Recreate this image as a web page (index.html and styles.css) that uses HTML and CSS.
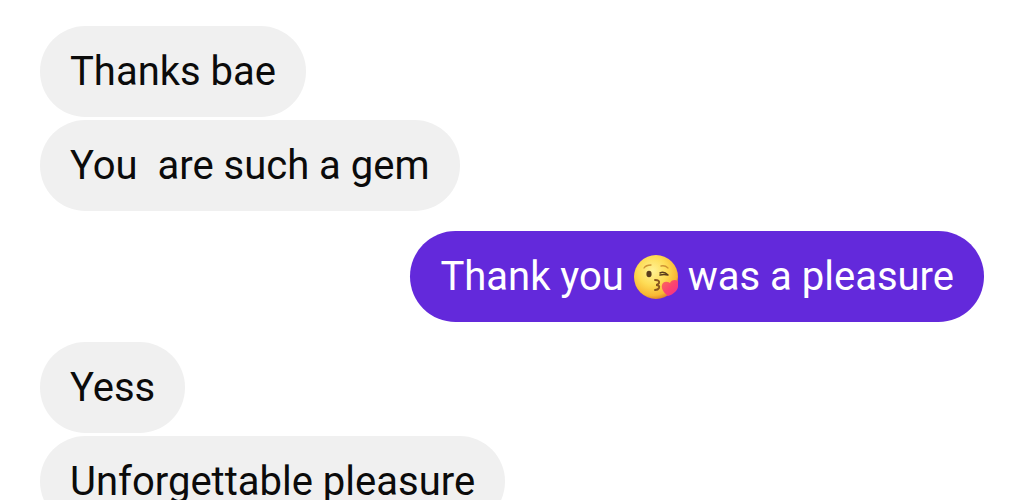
FILE: index.html
```html
<!DOCTYPE html>
<html lang="en">
  <head>
    <meta charset="UTF-8" />
    <meta name="viewport" content="width=device-width, initial-scale=1.0" />
    <title>Chat</title>
    <link rel="stylesheet" href="styles.css">
  </head>
  <body>
    <main class="chat">
      <div class="group received">
        <p class="bubble">Thanks bae</p>
        <p class="bubble">You&nbsp; are such a gem</p>
      </div>
      <div class="group sent">
        <p class="bubble">Thank you
          <svg class="emoji" viewBox="0 0 44 44" role="img" aria-label="Face blowing a kiss">
            <defs>
              <radialGradient id="face" cx="42%" cy="36%" r="66%">
                <stop offset="0%" stop-color="#fff296"/>
                <stop offset="50%" stop-color="#fedc55"/>
                <stop offset="85%" stop-color="#f8b733"/>
                <stop offset="100%" stop-color="#dc7f28"/>
              </radialGradient>
              <linearGradient id="heart" x1="0" y1="0" x2="1" y2="1">
                <stop offset="0%" stop-color="#fa6f58"/>
                <stop offset="50%" stop-color="#fb4270"/>
                <stop offset="100%" stop-color="#f02c92"/>
              </linearGradient>
            </defs>
            <circle cx="22" cy="22" r="22" fill="url(#face)"/>
            <path d="M10 13 Q12 10 17 10" stroke="#cf9434" stroke-width="1.3" fill="none" stroke-linecap="round"/>
            <path d="M27 11 Q31 10 34 13" stroke="#cf9434" stroke-width="1.3" fill="none" stroke-linecap="round"/>
            <ellipse cx="15" cy="19" rx="2.6" ry="3.3" fill="#593c1c"/>
            <path d="M26 18 Q30 16 34 20 Q30 19 26 20" stroke="#593c1c" stroke-width="1.5" fill="none" stroke-linecap="round" stroke-linejoin="round"/>
            <path d="M21 25 Q26 25 25 28 Q24 30 22 30 Q26 30 25 33 Q24 35 21 35" stroke="#8a551f" stroke-width="1.9" fill="none" stroke-linecap="round"/>
            <path d="M34 41 C30 38 27 34 28 30 C29 26 33 26 36 28 C37 25 41 24 44 26 C45 30 44 34 41 37 C39 39 37 40 34 41 Z" fill="url(#heart)"/>
          </svg>
          was a pleasure</p>
      </div>
      <div class="group received">
        <p class="bubble">Yess</p>
        <p class="bubble">Unforgettable pleasure</p>
      </div>
    </main>
  </body>
</html>
```

FILE: styles.css
```css
* {
  margin: 0;
  padding: 0;
  box-sizing: border-box;
}

body {
  font-family: Roboto, sans-serif;
  background-color: #ffffff;
  color: #0b0b0b;
  overflow: hidden;
}

.chat {
  display: flex;
  flex-direction: column;
  gap: 20px;
  height: 100vh;
  padding: 26px 40px 0;
  overflow: hidden;
}

.group {
  display: flex;
  flex-direction: column;
  flex-shrink: 0;
  gap: 3px;
}

.received {
  align-items: flex-start;
}

.sent {
  align-items: flex-end;
}

.bubble {
  padding: 22px 30px 21px;
  border-radius: 46px;
  background: #f0f0f0;
  font-size: 40px;
  line-height: 48px;
}

.sent .bubble {
  background: #6329db;
  color: #ffffff;
}

.emoji {
  width: 44px;
  height: 44px;
  vertical-align: -9px;
}
```
